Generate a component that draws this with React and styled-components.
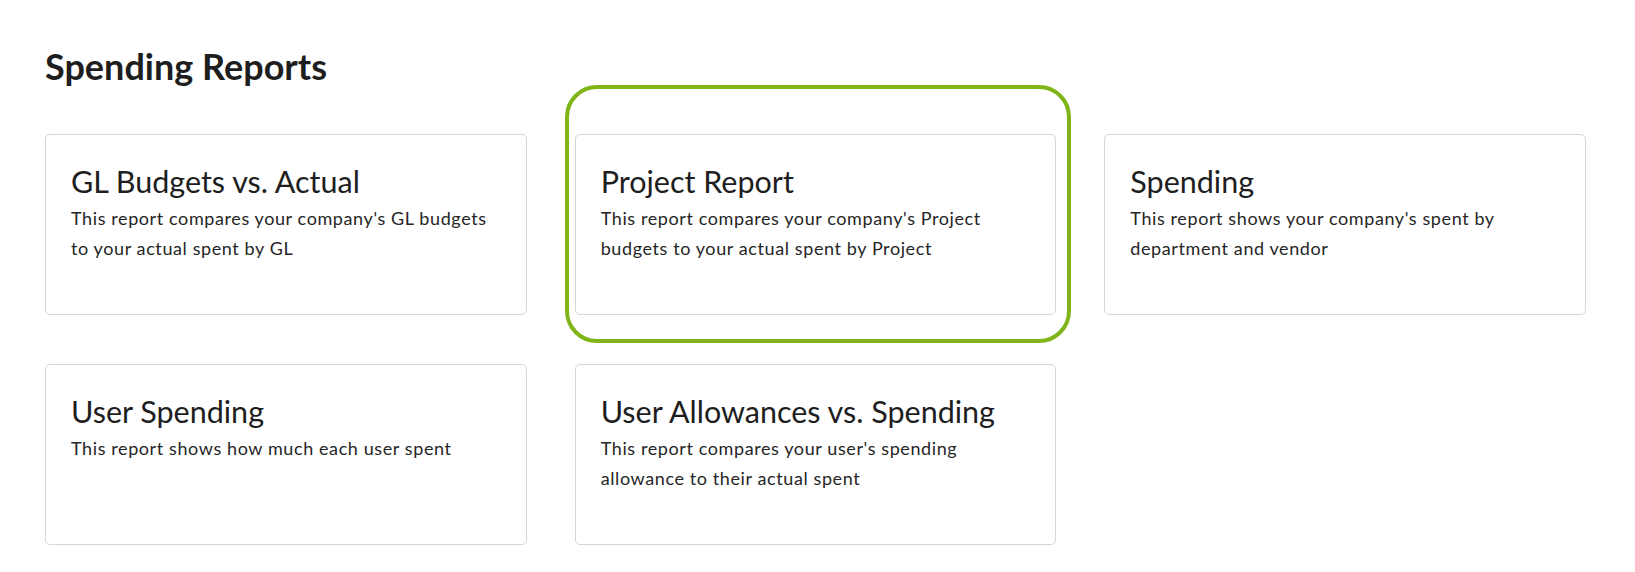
import React from "react";
import styled, { createGlobalStyle } from "styled-components";

const Global = createGlobalStyle`
  html, body { margin: 0; padding: 0; background: #ffffff; }
  body { font-family: Lato, "Open Sans", sans-serif; color: #222222; }
  * { box-sizing: border-box; }
`;

const Page = styled.main`
  padding: 44px 49px 0 45px;
`;

const Heading = styled.h1`
  margin: 0 0 46px 0;
  font-family: Lato, sans-serif;
  font-weight: 700;
  font-size: 36px;
  line-height: 44px;
  color: #1e1e1e;
`;

const Grid = styled.div`
  display: grid;
  grid-template-columns: repeat(3, 1fr);
  column-gap: 48px;
  row-gap: 49px;
`;

const Card = styled.section`
  position: relative;
  height: 181px;
  border: 1px solid #d6d6d6;
  border-radius: 5px;
  padding: 28px 24px 0 25px;
  background: #fff;
`;

const Highlight = styled.div`
  position: absolute;
  left: -11px;
  right: -16px;
  top: -50px;
  bottom: -29px;
  border: 4px solid #80b51a;
  border-radius: 32px;
  pointer-events: none;
`;

const Title = styled.h2`
  margin: 0 0 4px;
  font-family: Lato, sans-serif;
  font-weight: 400;
  font-size: 30.5px;
  line-height: 36px;
  color: #1e1e1e;
`;

const Desc = styled.p`
  margin: 0;
  font-family: Lato, sans-serif;
  font-size: 18px;
  line-height: 30px;
  letter-spacing: 0.6px;
  color: #262626;
  max-width: 420px;
`;

const reports = [
  { title: "GL Budgets vs. Actual", desc: "This report compares your company's GL budgets to your actual spent by GL" },
  { title: "Project Report", desc: "This report compares your company's Project budgets to your actual spent by Project", highlight: true },
  { title: "Spending", desc: "This report shows your company's spent by department and vendor" },
  { title: "User Spending", desc: "This report shows how much each user spent" },
  { title: "User Allowances vs. Spending", desc: "This report compares your user's spending allowance to their actual spent" },
];

export default function App() {
  return (
    <>
      <Global />
      <Page>
        <Heading>Spending Reports</Heading>
        <Grid>
          {reports.map((r) => (
            <Card key={r.title}>
              {r.highlight && <Highlight />}
              <Title>{r.title}</Title>
              <Desc>{r.desc}</Desc>
            </Card>
          ))}
        </Grid>
      </Page>
    </>
  );
}
